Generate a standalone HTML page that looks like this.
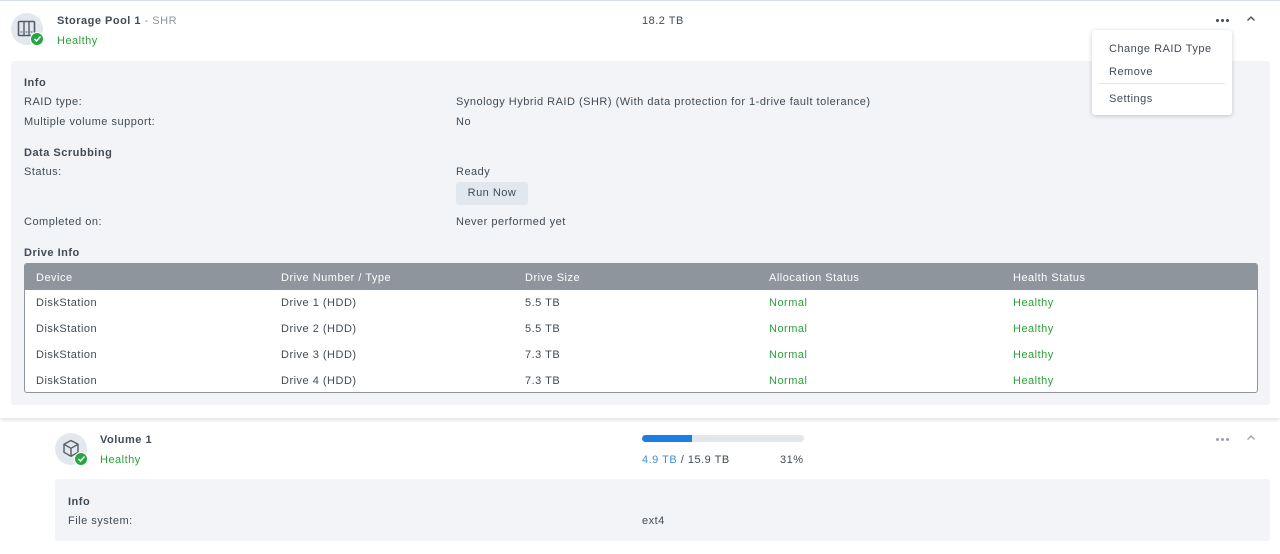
<!DOCTYPE html>
<html><head><style>
*{margin:0;padding:0;box-sizing:border-box}
body{width:1280px;height:554px;background:#fff;font-family:"Liberation Sans",sans-serif;font-size:11px;letter-spacing:.5px;color:#414b55;position:relative;overflow:hidden}
.a{position:absolute;white-space:nowrap;margin-top:1px}
.b{font-weight:bold;color:#414b55}
.g{color:#2c9f3a}
.card{position:absolute;left:0;top:1px;width:1280px;height:417px;background:#fff;box-shadow:0 2px 4px rgba(0,0,0,.12)}
.panel{position:absolute;background:#f2f4f8;border-radius:3px}
.ico{position:absolute;width:32px;height:32px;border-radius:50%;background:#e3e8ef}
.chk{position:absolute;width:14px;height:14px;border-radius:50%;background:#27a543;border:1.5px solid #fff}
.tbl{position:absolute;left:24px;top:263px;width:1234px;height:130px;border:1px solid #8e959c;border-radius:3px;background:#fff;overflow:hidden}
.th{position:absolute;left:0;top:0;width:100%;height:26px;background:#8e959c;color:#fff}
.dots{position:absolute;width:14px;height:3px}
.dots i{position:absolute;top:0;width:3px;height:3px;border-radius:50%;background:#414b55}
</style></head><body>
<div style="position:absolute;left:0;top:0;width:1280px;height:1px;background:#d5e3f0"></div>
<div class="card"></div>
<div class="ico" style="left:11px;top:13px"></div>
<svg class="a" style="left:17px;top:19px" width="20" height="18" viewBox="0 0 20 18"><rect x="1.5" y="1.5" width="16" height="14" rx="1" fill="none" stroke="#555d66" stroke-width="1.6"/><line x1="7" y1="2" x2="7" y2="15" stroke="#555d66" stroke-width="1.4"/><line x1="12" y1="2" x2="12" y2="15" stroke="#555d66" stroke-width="1.4"/><line x1="3.5" y1="12" x2="5.5" y2="12" stroke="#555d66"/><line x1="8.5" y1="12" x2="10.5" y2="12" stroke="#555d66"/><line x1="13.5" y1="12" x2="15.5" y2="12" stroke="#555d66"/></svg>
<div class="chk" style="left:30px;top:32px"></div>
<svg style="position:absolute;left:33px;top:35px" width="9" height="8"><path d="M1.5 4l2 2 4-4.5" stroke="#fff" stroke-width="1.5" fill="none"/></svg>
<div class="a" style="left:57px;top:14px"><span class="b">Storage Pool 1</span><span style="color:#8e959c"> - SHR</span></div>
<div class="a g" style="left:57px;top:34px">Healthy</div>
<div class="a" style="left:642px;top:14px">18.2 TB</div>
<div class="dots" style="left:1216px;top:19px"><i style="left:0"></i><i style="left:5px"></i><i style="left:10px"></i></div>
<svg style="position:absolute;left:1246px;top:15px" width="10" height="7"><path d="M1.5 5.5l3.5-3.5 3.5 3.5" stroke="#414b55" stroke-width="1.3" fill="none"/></svg>

<div class="panel" style="left:11px;top:61px;width:1259px;height:344px"></div>
<div class="a b" style="left:24px;top:76px">Info</div>
<div class="a" style="left:24px;top:95px">RAID type:</div>
<div class="a" style="left:456px;top:95px">Synology Hybrid RAID (SHR) (With data protection for 1-drive fault tolerance)</div>
<div class="a" style="left:24px;top:115px">Multiple volume support:</div>
<div class="a" style="left:456px;top:115px">No</div>
<div class="a b" style="left:24px;top:146px">Data Scrubbing</div>
<div class="a" style="left:24px;top:165px">Status:</div>
<div class="a" style="left:456px;top:165px">Ready</div>
<div class="a" style="left:456px;top:181px;width:72px;height:23px;background:#e1e7ee;border-radius:3px;text-align:center;line-height:23px">Run Now</div>
<div class="a" style="left:24px;top:215px">Completed on:</div>
<div class="a" style="left:456px;top:215px">Never performed yet</div>
<div class="a b" style="left:24px;top:246px">Drive Info</div>
<div class="tbl"><div class="th">
<div class="a" style="left:11px;top:7px">Device</div><div class="a" style="left:256px;top:7px">Drive Number / Type</div><div class="a" style="left:500px;top:7px">Drive Size</div><div class="a" style="left:744px;top:7px">Allocation Status</div><div class="a" style="left:988px;top:7px">Health Status</div></div>
<div class="a" style="left:11px;top:32px">DiskStation</div><div class="a" style="left:256px;top:32px">Drive 1 (HDD)</div><div class="a" style="left:500px;top:32px">5.5 TB</div><div class="a g" style="left:744px;top:32px">Normal</div><div class="a g" style="left:988px;top:32px">Healthy</div>
<div class="a" style="left:11px;top:58px">DiskStation</div><div class="a" style="left:256px;top:58px">Drive 2 (HDD)</div><div class="a" style="left:500px;top:58px">5.5 TB</div><div class="a g" style="left:744px;top:58px">Normal</div><div class="a g" style="left:988px;top:58px">Healthy</div>
<div class="a" style="left:11px;top:84px">DiskStation</div><div class="a" style="left:256px;top:84px">Drive 3 (HDD)</div><div class="a" style="left:500px;top:84px">7.3 TB</div><div class="a g" style="left:744px;top:84px">Normal</div><div class="a g" style="left:988px;top:84px">Healthy</div>
<div class="a" style="left:11px;top:110px">DiskStation</div><div class="a" style="left:256px;top:110px">Drive 4 (HDD)</div><div class="a" style="left:500px;top:110px">7.3 TB</div><div class="a g" style="left:744px;top:110px">Normal</div><div class="a g" style="left:988px;top:110px">Healthy</div>
</div>

<div style="position:absolute;left:1092px;top:30px;width:140px;height:85px;background:#fff;border-radius:3px;box-shadow:0 1px 5px rgba(0,0,0,.2)">
<div class="a" style="left:17px;top:12px">Change RAID Type</div>
<div class="a" style="left:17px;top:35px">Remove</div>
<div style="position:absolute;left:7px;top:53px;width:126px;height:1px;background:#e6e9ed"></div>
<div class="a" style="left:17px;top:62px">Settings</div>
</div>

<div class="ico" style="left:55px;top:433px"></div>
<svg style="position:absolute;left:62px;top:439px" width="18" height="19" viewBox="0 0 18 19"><path d="M9 1.5l7 3.8v8l-7 4-7-4v-8z M2 5.3l7 4 7-4 M9 9.3v8" stroke="#555d66" stroke-width="1.4" fill="none" stroke-linejoin="round"/></svg>
<div class="chk" style="left:74px;top:452px"></div>
<svg style="position:absolute;left:77px;top:455px" width="9" height="8"><path d="M1.5 4l2 2 4-4.5" stroke="#fff" stroke-width="1.5" fill="none"/></svg>
<div class="a b" style="left:100px;top:433px">Volume 1</div>
<div class="a g" style="left:100px;top:453px">Healthy</div>
<div style="position:absolute;left:642px;top:435px;width:162px;height:7px;background:#e3e6ea;border-radius:4px"><div style="width:50px;height:7px;background:#1a7ee3;border-radius:4px 0 0 4px"></div></div>
<div class="a" style="left:642px;top:453px"><span style="color:#3f8ee0">4.9 TB</span> / 15.9 TB</div>
<div class="a" style="left:780px;top:453px">31%</div>
<div class="dots" style="left:1216px;top:438px"><i style="left:0;background:#9aa1a8"></i><i style="left:5px;background:#9aa1a8"></i><i style="left:10px;background:#9aa1a8"></i></div>
<svg style="position:absolute;left:1246px;top:434px" width="10" height="7"><path d="M1.5 5.5l3.5-3.5 3.5 3.5" stroke="#9aa1a8" stroke-width="1.3" fill="none"/></svg>
<div class="panel" style="left:55px;top:479px;width:1215px;height:62px"></div>
<div class="a b" style="left:68px;top:495px">Info</div>
<div class="a" style="left:68px;top:514px">File system:</div>
<div class="a" style="left:642px;top:514px">ext4</div>
</body></html>
